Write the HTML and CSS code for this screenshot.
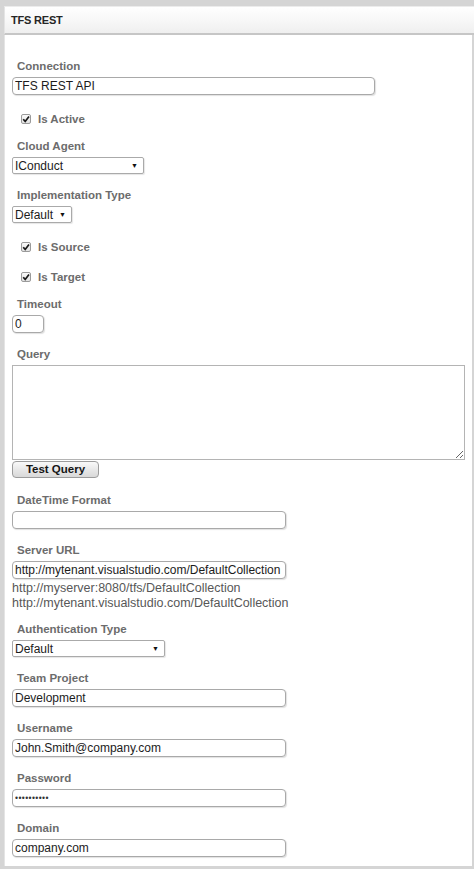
FILE: index.html
```html
<!DOCTYPE html>
<html>
<head>
<meta charset="utf-8">
<link rel="stylesheet" href="styles.css">
</head>
<body>
<div class="frame">
  <div class="header">TFS REST</div>
  <div class="panel">
    <div class="field">
      <label class="lbl">Connection</label>
      <input class="inp w-conn" type="text" value="TFS REST API">
    </div>
    <div class="check">
      <span class="box"><svg width="10" height="10" viewBox="0 0 10 10"><path d="M2.2 5.2 L4.2 7.4 L8 2.4" fill="none" stroke="#1a1a1a" stroke-width="1.7"/></svg></span>
      <span class="lbl">Is Active</span>
    </div>
    <div class="field">
      <label class="lbl">Cloud Agent</label>
      <div class="sel w-cloud"><span>IConduct</span><span class="arrow">▼</span></div>
    </div>
    <div class="field">
      <label class="lbl">Implementation Type</label>
      <div class="sel w-impl"><span>Default</span><span class="arrow">▼</span></div>
    </div>
    <div class="check">
      <span class="box"><svg width="10" height="10" viewBox="0 0 10 10"><path d="M2.2 5.2 L4.2 7.4 L8 2.4" fill="none" stroke="#1a1a1a" stroke-width="1.7"/></svg></span>
      <span class="lbl">Is Source</span>
    </div>
    <div class="check">
      <span class="box"><svg width="10" height="10" viewBox="0 0 10 10"><path d="M2.2 5.2 L4.2 7.4 L8 2.4" fill="none" stroke="#1a1a1a" stroke-width="1.7"/></svg></span>
      <span class="lbl">Is Target</span>
    </div>
    <div class="field">
      <label class="lbl">Timeout</label>
      <input class="inp w-time" type="text" value="0">
    </div>
    <div class="field field-query">
      <label class="lbl">Query</label>
      <textarea class="query"></textarea>
      <button class="btn" type="button">Test Query</button>
    </div>
    <div class="field">
      <label class="lbl">DateTime Format</label>
      <input class="inp w-std" type="text" value="">
    </div>
    <div class="field field-url">
      <label class="lbl">Server URL</label>
      <input class="inp w-std" type="text" value="http://mytenant.visualstudio.com/DefaultCollection">
      <div class="help">
        <div>http://myserver:8080/tfs/DefaultCollection</div>
        <div>http://mytenant.visualstudio.com/DefaultCollection</div>
      </div>
    </div>
    <div class="field">
      <label class="lbl">Authentication Type</label>
      <div class="sel w-auth"><span>Default</span><span class="arrow">▼</span></div>
    </div>
    <div class="field">
      <label class="lbl">Team Project</label>
      <input class="inp w-std" type="text" value="Development">
    </div>
    <div class="field">
      <label class="lbl">Username</label>
      <input class="inp w-std" type="text" value="John.Smith@company.com">
    </div>
    <div class="field">
      <label class="lbl">Password</label>
      <input class="inp w-std pwd" type="password" value="abcdefghij">
    </div>
    <div class="field">
      <label class="lbl">Domain</label>
      <input class="inp w-std" type="text" value="company.com">
    </div>
  </div>
</div>
</body>
</html>
```

FILE: styles.css
```css
html, body {
  margin: 0;
  padding: 0;
}
body {
  background: #d5d5d5;
  font-family: "Liberation Sans", Arial, sans-serif;
  width: 474px;
  height: 869px;
  overflow: hidden;
}
.frame {
  height: 869px;
  box-sizing: border-box;
  padding: 6px 2px 3px 4px;
  display: flex;
  flex-direction: column;
}
.header {
  flex-shrink: 0;
  height: 26px;
  margin-right: -2px;
  border-top: 1px solid #ececec;
  border-left: 1px solid #e4e4e4;
  border-bottom: 2px solid #c6c6c6;
  background: linear-gradient(#ffffff, #f6f6f6 60%, #efefef);
  display: flex;
  align-items: center;
  padding-left: 6px;
  font-size: 11px;
  font-weight: bold;
  color: #262626;
  letter-spacing: -0.2px;
}
.panel {
  flex: 1;
  min-height: 0;
  overflow: hidden;
  background: #fff;
  border-left: 1px solid #e4e4e4;
  padding: 24px 0 0 7px;
  display: flex;
  flex-direction: column;
  align-items: flex-start;
}
.field {
  flex-shrink: 0;
  display: flex;
  flex-direction: column;
  align-items: flex-start;
  margin-bottom: 14px;
}
.lbl {
  display: block;
  font-size: 11.5px;
  font-weight: bold;
  color: #6c6c6c;
  line-height: 14px;
  height: 14px;
  margin: 0 0 4px 5px;
  white-space: nowrap;
}
.inp {
  box-sizing: border-box;
  height: 18px;
  margin: 0;
  padding: 0 2px;
  border: 1px solid #a9a9a9;
  border-radius: 4px;
  box-shadow: 1px 1px 1px rgba(0, 0, 0, 0.12);
  font-family: "Liberation Sans", Arial, sans-serif;
  font-size: 12px;
  color: #1c1c1c;
  background: #fff;
  outline: none;
}
.w-conn { width: 363px; }
.w-std { width: 274px; }
.w-time { width: 32px; }
.pwd {
  font-size: 8.5px;
  letter-spacing: 0.4px;
  color: #333;
}
.check {
  flex-shrink: 0;
  display: flex;
  align-items: center;
  height: 20px;
  margin-bottom: 10px;
  padding-left: 9px;
  gap: 7px;
}
.check .lbl {
  margin: 0;
}
.box {
  box-sizing: border-box;
  width: 10px;
  height: 10px;
  border: 1px solid #9a9a9a;
  border-radius: 2px;
  background: linear-gradient(#fafafa, #e2e2e2);
  display: flex;
  align-items: center;
  justify-content: center;
}
.box svg {
  display: block;
  flex-shrink: 0;
}
.sel {
  box-sizing: border-box;
  height: 17px;
  border: 1px solid #aaaaaa;
  border-radius: 2px;
  background: #fff;
  box-shadow: 1px 1px 1px rgba(0, 0, 0, 0.1);
  display: flex;
  align-items: center;
  justify-content: space-between;
  padding: 0 5px 0 2px;
  font-size: 12px;
  color: #1c1c1c;
}
.arrow {
  font-size: 7px;
  color: #111;
  line-height: 1;
}
.w-cloud { width: 132px; }
.w-impl { width: 60px; }
.w-auth { width: 153px; }
.field-query {
  margin-bottom: 15px;
}
.query {
  box-sizing: border-box;
  width: 453px;
  height: 95px;
  margin: 0;
  padding: 2px;
  border: 1px solid #b4b4b4;
  border-radius: 0;
  resize: both;
  font-family: "Liberation Sans", Arial, sans-serif;
  font-size: 12px;
  outline: none;
}
.btn {
  box-sizing: border-box;
  width: 87px;
  height: 17px;
  margin: 1px 0 0 0;
  padding: 0;
  border: 1px solid #9c9c9c;
  border-radius: 4px;
  background: linear-gradient(#f9f9f9, #e8e8e8 50%, #d9d9d9);
  font-family: "Liberation Sans", Arial, sans-serif;
  font-size: 11.5px;
  font-weight: bold;
  color: #151515;
  line-height: 15px;
}
.field-url {
  margin-bottom: 11px;
}
.help {
  margin-top: 2px;
  font-size: 12.5px;
  line-height: 15px;
  color: #575757;
  white-space: nowrap;
}
```
